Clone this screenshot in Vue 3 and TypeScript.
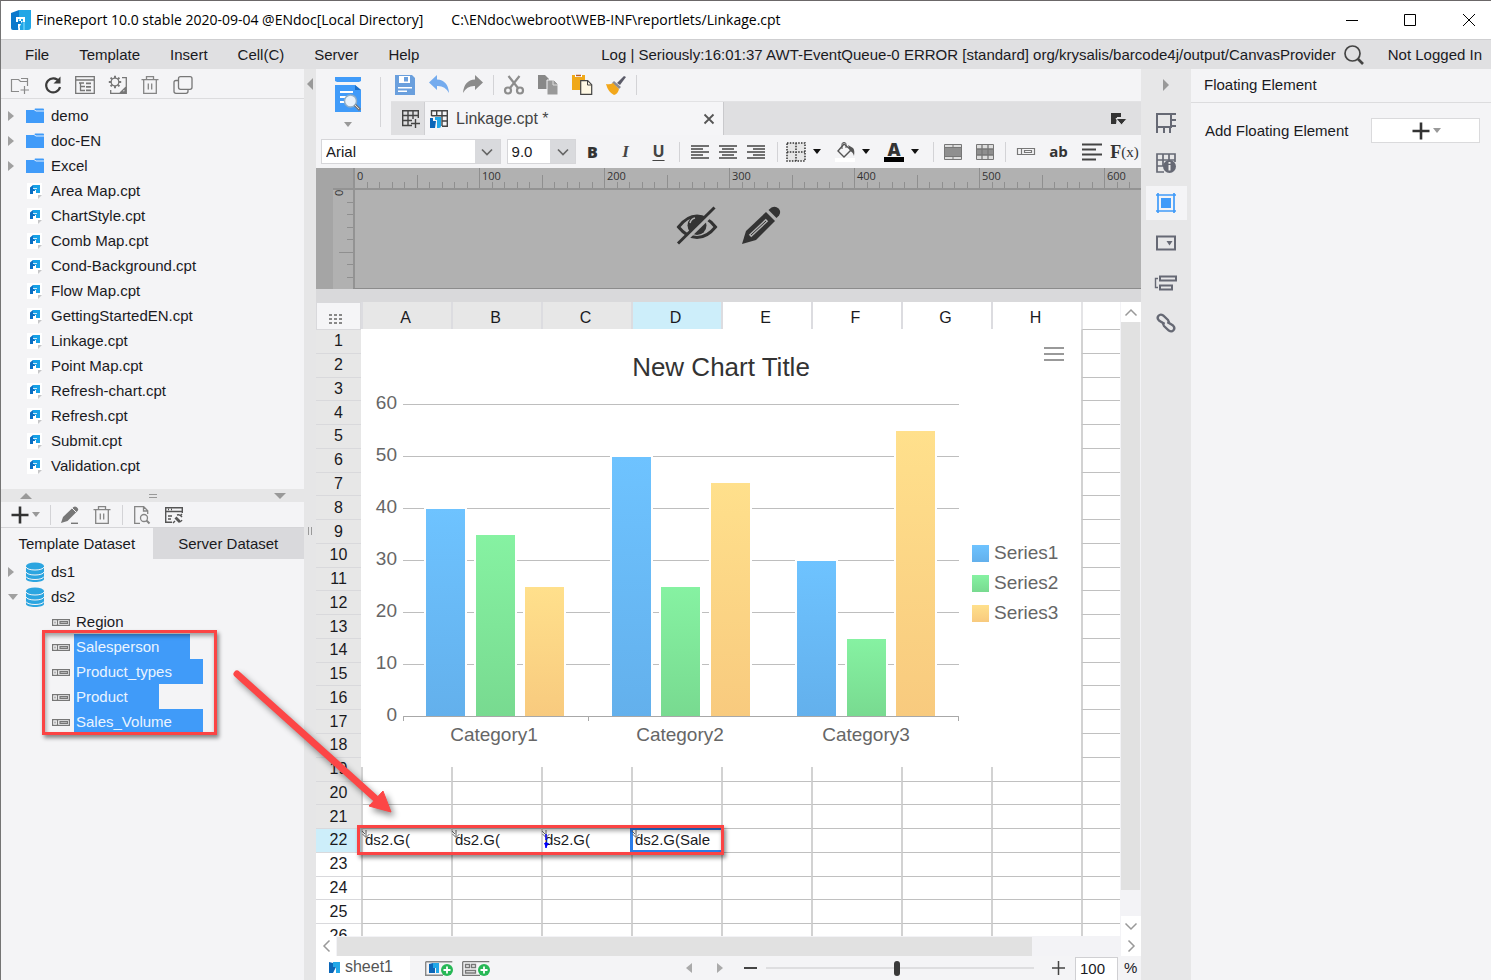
<script setup lang="ts">
import { computed, h, onBeforeUnmount, onMounted, ref } from 'vue'

const icons: Record<string, string> = {
  logo: '<path d="M0 3 8 0v7H5v4h5v3l-3 6H2q-2 0-2-2z" fill="#0a78cc"/><path d="M8 0h12v17q0 3-3 3h-3V8H9l-1 3H5V7h3z" fill="#20a6e6"/><path d="M9 20h5v-9l-4 3z" fill="#55c4f4"/><path d="M9 20v-6l3-3h-2V8h4v3l-2 2v7z" fill="#20a6e6"/><path d="M5 7h9v5h-2V9H7v3H5z" fill="#fff"/><path d="M7 14h3l-3 6z" fill="#fff"/>',
  search: '<g fill="none" stroke="#444"><circle cx="8.500" cy="8.500" r="7.500" stroke-width="1.700"/><path d="m14 14 5 5" stroke-width="2.600"/></g>',
  newFolder: '<g fill="none" stroke="#8a8a8a" stroke-width="1.200"><path d="M9 16.500H1.500v-12h7l2 2h7V11M11 3.500h6.500v3M14.500 11v8M10.500 15h8.500"/></g>',
  refresh: '<path d="M16 6.500A7 7 0 1 0 17 12" fill="none" stroke="#3c3c3c" stroke-width="2.200"/><path d="M17.500 1.500v7h-7z" fill="#3c3c3c"/>',
  treeView: '<g fill="none" stroke="#777" stroke-width="1.300"><path d="M.700 1.700h18.600v16.600H.700zM.700 5h18.600M5.500 8v7.500H10M5.500 11.500H10M4 8h5"/><path d="M11 8.300h5M11 11.800h5M11 15.300h5" stroke-width="1.800"/></g>',
  gearForm: '<g fill="none" stroke="#777" stroke-width="1.300"><circle cx="7" cy="7" r="3.800"/><path d="M7 .800v2.200M7 11v2.200M.800 7H3M11 7h2.200M2.600 2.600l1.600 1.600M9.800 9.800l1.600 1.600M2.600 11.400l1.600-1.600M9.800 4.200l1.600-1.600" stroke-width="2"/><path d="M14 2.700h4.300v15.600H2.700V15M13 17l4-4v4z"/></g>',
  trash: '<g fill="none" stroke="#858585" stroke-width="1.300"><path d="M1.500 4.700h17M6.500 4.500V1.700h7v2.800M3.700 5v13.300h12.600V5M8.300 8.500v6M11.700 8.500v6"/></g>',
  copyOutline: '<g fill="none" stroke="#777" stroke-width="1.300"><rect x="5.500" y="1.700" width="13.500" height="12.600" rx="2"/><path d="M5.500 5.500H3q-2 0-2 2v9q0 1.800 2 1.800h10q2 0 2-2v-2"/></g>',
  folder: '<path d="M0 3h8l1-1.500h8q1 0 1 1V16H0z" fill="#409bf9"/><path d="M7.500 2.200 10 4h8" stroke="#e4f0fd" fill="none" stroke-width="1"/>',
  file: '<path d="M1 1h15v12l-4 4H1z" fill="#fff"/><path d="M12 17v-4h4z" fill="#c6c6c8"/><path d="M4 5.500 7 3v4h2v2H7v3H4z" fill="#0b6fc4"/><path d="M7 3h7v8h-4V8H8V6H7z" fill="#17a0e6"/><path d="M7 6h4v1H7z" fill="#cfeafa"/>',
  db: '<path d="M0 4v13c0 4 18 4 18 0V4z" fill="#2ca5e0"/><ellipse cx="9" cy="4" rx="9" ry="3.500" fill="#2ca5e0"/><path d="M0 5c1 4 17 4 18 0M0 10c1 4 17 4 18 0M0 14.500c1 4 17 4 18 0" fill="none" stroke="#f4f4f6" stroke-width="1"/>',
  field: '<g fill="none" stroke="#777" stroke-width="1.200"><path d="M.600 6.600h16.800v5.800H.600z"/><path d="M5.500 7v5"/><path d="M8 8.700h7.500v1.700H8z"/></g><path d="M3 8.500v2" stroke="#777"/>',
  plus: '<path d="M10 1.500v17M1.500 10h17" stroke="#333" stroke-width="2.600"/>',
  pencil: '<path d="m1 18 2-6L13.500 2q1.500-1 3 0l1 1q1.500 1.500 0 3L7.500 16z" fill="#777"/><path d="m12 3 4.500 4.500" stroke="#f4f4f6"/><path d="M11 18.300h7" stroke="#777" stroke-width="1.400"/>',
  docSearch: '<g fill="none" stroke="#858585" stroke-width="1.300"><path d="M8 18.300H2.700V1.700h9l4 4V9M11.500 2v4h4"/><circle cx="12" cy="13" r="3.500"/><path d="m14.500 15.500 3 3" stroke-width="2"/></g>',
  connect: '<g fill="none" stroke="#555" stroke-width="1.400"><path d="M8 17.300H1.700V2.700h16.600V8M2 6.500h16M4 11h4M4 14h3M4 4.500h1M7 4.500h1"/><path d="m9 18 2-2m5-5 2-2m-7 4 4 4q2 0 3-2m-6-3 4 4m-3-6q3-1 5 2"/></g>',
  preview: '<path d="M0 0h26v4l-2 1H2L0 4z" fill="#409bf9"/><path d="M0 8h20l6 5v22H0z" fill="#409bf9"/><path d="M20 8v5h6z" fill="#1b6fc9"/><path d="M5 15h13M5 20h7M5 25h5" stroke="#fff" stroke-width="2"/><circle cx="15.500" cy="24" r="6" fill="#e7f1fa" stroke="#8faec8" stroke-width="1.500"/><path d="m20 28 5 5" stroke="#777" stroke-width="3"/><path d="m20 28 4 4" stroke="#ddd" stroke-width="1"/>',
  save: '<path d="M0 0h17l3 3v17H0z" fill="#6a9fdd"/><path d="M4 1h11v7H4z" fill="#fff"/><path d="M9 2h4v4.500H9z" fill="#6a9fdd"/><path d="M3 12.700h14M3 16.300h9" stroke="#fff" stroke-width="1.600"/>',
  undo: '<path d="M0 7.500 8 0v4.500Q19 5 20 18 16 10.500 8 11v4z" fill="#74abee"/>',
  redo: '<path d="M20 7.500 12 0v4.500Q1 5 0 18 4 10.500 12 11v4z" fill="#8b8b8b"/>',
  cut: '<g fill="none" stroke="#8d8d8d" stroke-width="2.200"><circle cx="4" cy="15.500" r="3"/><circle cx="16" cy="15.500" r="3"/><path d="M4.500 1 14 13M15.500 1 6 13"/></g>',
  copy: '<path d="M0 0h7l4 4v10H0z" fill="#888"/><path d="M9 5h7l4 4v11H9z" fill="#999" stroke="#f4f4f6" stroke-width="1"/><path d="M15 5v5h5" fill="none" stroke="#ddd"/>',
  paste: '<path d="M0 0h13v15H0z" fill="#f0a818"/><path d="M3 0h7v2H3z" fill="#fff"/><path d="M4 .500h5" stroke="#b85c28" stroke-width="1.500"/><path d="M8.700 5.700h7l4 4v9.600h-11z" fill="#fff8e4" stroke="#444" stroke-width="1.200"/><path d="M15.500 6v4h4" fill="none" stroke="#444"/>',
  brush: '<path d="m11 8 7-7 2 1-6 8z" fill="#5b5b68"/><path d="m8 6 7 6-2 2-7-6z" fill="#8c8c94"/><path d="M7 8 13 14q-1 5-5 6Q2 17 0 9q4 1 7-1z" fill="#f2a71b"/>',
  newTab: '<g fill="none" stroke="#444" stroke-width="1.400"><path d="M11 16.500H1.700V1.700h15.600V9M1.700 6.500h15.600M1.700 11.500H11M7 2v14.500M12 2v8M14.500 10v9M10 14.500h9"/></g>',
  tabFile: '<path d="M2.500 7V1.700h15.800v15.600H13M2.500 6.700h15.800M13 12h5.300M7.700 2v5M13 2v15" fill="none" stroke="#444" stroke-width="1.400"/><path d="M1 9h3v3h3l-1 7H1z" fill="#0b66b8"/><path d="M6 8h6v9q0 2-2 2H8v-8H6z" fill="#22a8e8"/>',
  close: '<path d="m5.500 5.500 9 9m0-9-9 9" stroke="#555" stroke-width="1.800"/>',
  tabMenu: '<path d="M2 4h10v4H8l-1 7H2z" fill="#333"/><path d="M7 9.500h11L12.500 16z" fill="#333" stroke="#e0e0e2"/>',
  chevron: '<path d="m5 7.500 5 5 5-5" fill="none" stroke="#666" stroke-width="1.700"/>',
  alignLeft: '<path d="M1 4h18M1 7h12M1 10h18M1 13h12M1 16h18" stroke="#444" stroke-width="1.400"/>',
  alignCenter: '<path d="M1 4h18M4 7h12M1 10h18M4 13h12M1 16h18" stroke="#444" stroke-width="1.400"/>',
  alignRight: '<path d="M1 4h18M7 7h12M1 10h18M7 13h12M1 16h18" stroke="#444" stroke-width="1.400"/>',
  border: '<path d="M1 1h18v18H1zM10 1v18M1 10h18" fill="#e6e6e6" stroke="#333" stroke-width="1.500" stroke-dasharray="1.500 1.300"/>',
  bucket: '<path d="m9 2 7 6-7 7-6-6z" fill="none" stroke="#555" stroke-width="1.400"/><path d="M7 7V2q0-1.500 2-1.500t2 1.500v4" fill="none" stroke="#555"/><path d="m13 3 5 3q2 2 1 8-1-4-4-5z" fill="#555"/><path d="M0 16h20v4H0z" fill="#fff"/>',
  merge: '<path d="M1.500 2.500h17v15h-17z" fill="#ddd" stroke="#777"/><path d="M2 5.500h16v9H2z" fill="#8f8f8f"/><path d="M10 2.500v3M10 14.500v3M1.500 5.500h17M1.500 14.500h17" stroke="#777"/>',
  split: '<path d="M1.500 2.500h17v15h-17z" fill="#ddd" stroke="#777"/><path d="M2 7h16v6H2z" fill="#8f8f8f"/><path d="M7 2.500v15M13 2.500v15M1.500 7h17M1.500 13h17" stroke="#777" stroke-width="1.300"/>',
  widget: '<g fill="none" stroke="#777" stroke-width="1.200"><path d="M1.500 6.500h17v6h-17zM5.500 6.500v6M8.500 8.500h7v2h-7z"/></g>',
  para: '<path d="M0 2.500h20M0 7.500h14M0 12.500h20M0 17.500h14" stroke="#444" stroke-width="2"/>',
  cells: '<g fill="none" stroke="#666974" stroke-width="2"><path d="M1 20V1h19M1 14h14V1M15 7h5M14 13h6M14 20v-6M8 14v6"/></g>',
  cellInfo: '<g fill="none" stroke="#666974" stroke-width="1.700"><path d="M8 19H1V1h18v8M1 7h18M1 13h7M7 1v12M13 1v6"/></g><circle cx="13.500" cy="13.500" r="6.500" fill="#666974"/><path d="M13.500 12v5.500M13.500 9v1.700" stroke="#eee" stroke-width="2"/>',
  floating: '<g fill="none" stroke="#409bf9" stroke-width="1.700"><path d="M0 2h20M0 18h20M2 0v20M18 0v20"/></g><path d="M5 5h10v10H5z" fill="#409bf9"/>',
  dropdown: '<path d="M1 3.500h18v13H1z" fill="none" stroke="#666974" stroke-width="2"/><path d="M10.500 8h6l-3 4.500z" fill="#666974"/>',
  hyper: '<g fill="none" stroke="#666974" stroke-width="2"><path d="M4 3.500h16v4H4zM4 12.500h12v4H4z"/><path d="M2 5.500H-.500v9H2" stroke-width="1.400"/></g>',
  link: '<g fill="none" stroke="#666974" stroke-width="2.300"><path d="M8.500 11 3 7.500q-2.500-2.500-.500-4.700t4.700-.300l4.800 4.500q1.500 2 .500 4"/><path d="m11.500 9 5.500 3.500q2.500 2.500.500 4.700t-4.700.300l-4.800-4.500q-1.500-2-.500-4"/></g>',
  eyeOff: '<g fill="none" stroke="#333"><path d="M1.500 21Q10 10 20 10t18.500 11Q30 31.500 20 31.500T1.500 21z" stroke-width="3"/></g><circle cx="20" cy="19.500" r="9.500" fill="#333"/><path d="M13 17q1-4 5-5" stroke="#b1b1b1" stroke-width="1.500" fill="none"/><path d="M3 39 40 3" stroke="#b1b1b1" stroke-width="4"/><path d="M1 37.500 37.500 1.500" stroke="#333" stroke-width="3"/>',
  editBig: '<path d="m1 38 4-13L25 6l9 9L15 34z" fill="#333"/><path d="m27.500 4 3-2.500q4-2 7 1t.500 7L35.500 12z" fill="#333"/><path d="m9 30 17-16" stroke="#b1b1b1" stroke-width="3.500"/><path d="m10 29 15-14" stroke="#333" stroke-width="1"/>',
  addSheet: '<path d="M.700 2.700h26.600M.700 2.700v13.600H18" fill="none" stroke="#888" stroke-width="1.400"/><path d="M4 5 8 4v3l2 2v5H4z" fill="#0b66b8"/><path d="M8 4h6v10h-3V9H8z" fill="#22a8e8"/><circle cx="22" cy="11" r="6" fill="#27b856"/><path d="M22 7.500v7M18.500 11h7" stroke="#fff" stroke-width="1.800"/>',
  addForm: '<path d="M.700 2.700h26.600M.700 2.700v13.600H18M3.500 5.500h4v3h-4zM9.500 5.500h4v3h-4zM3.500 11.500h10v2.500h-10z" fill="none" stroke="#777" stroke-width="1.300"/><circle cx="22" cy="11" r="6" fill="#27b856"/><path d="M22 7.500v7M18.500 11h7" stroke="#fff" stroke-width="1.800"/>',
  sheet: '<path d="M0 0 4 1v4h3l-3 6H0z" fill="#0b66b8"/><path d="M4 0h7v11H7V5H4z" fill="#22a8e8"/>',
  anchor: '<path d="M5 0v7M1.500 4 5 7.500 8.500 4M1 1l3 3" fill="none" stroke="#666" stroke-width="1"/>',
  parent: '<path d="M2 0v14" stroke="#00f" stroke-width="1.500" stroke-dasharray="6 2"/><path d="M0 9h5l-3 5z" fill="#00f"/>',
}

const Icon = (p: { name: string; w?: number; hh?: number }) =>
  h('svg', {
    width: p.w ?? 20,
    height: p.hh ?? 20,
    viewBox: `0 0 ${p.w ?? 20} ${p.hh ?? 20}`,
    'aria-hidden': 'true',
    innerHTML: icons[p.name],
  })
Icon.props = ['name', 'w', 'hh']

const menus = ['File', 'Template', 'Insert', 'Cell(C)', 'Server', 'Help']
const fileTools = [
  ['newFolder', 'New folder'], ['refresh', 'Refresh'], ['treeView', 'Show in tree'],
  ['gearForm', 'Settings'], ['trash', 'Delete'], ['copyOutline', 'Copy'],
]
const folders = ['demo', 'doc-EN', 'Excel']
const files = ['Area Map.cpt', 'ChartStyle.cpt', 'Comb Map.cpt', 'Cond-Background.cpt', 'Flow Map.cpt', 'GettingStartedEN.cpt',
  'Linkage.cpt', 'Point Map.cpt', 'Refresh-chart.cpt', 'Refresh.cpt', 'Submit.cpt', 'Validation.cpt']
const fields = ['Region', 'Salesperson', 'Product_types', 'Product', 'Sales_Volume']
const editTools = [['save', 'Save'], ['undo', 'Undo'], ['redo', 'Redo']]
const clipTools = [['cut', 'Cut'], ['copy', 'Copy'], ['paste', 'Paste'], ['brush', 'Format painter']]
const sideTools = [['cells', 'Cell element'], ['cellInfo', 'Cell attributes'], ['floating', 'Floating element'],
  ['dropdown', 'Widget settings'], ['hyper', 'Condition attributes'], ['link', 'Hyperlink']]
const columns = ['A', 'B', 'C', 'D', 'E', 'F', 'G', 'H']
const rowCount = 26
const activeRow = 22
const cellText: Record<string, string> = { A: 'ds2.G(', B: 'ds2.G(', C: 'ds2.G(', D: 'ds2.G(Sale' }

const fontName = ref('Arial')
const fontSize = ref('9.0')
const zoom = ref('100')
const slider = ref(49)
const tab = ref('template')

const rulerEl = ref<HTMLElement | null>(null)
const rulerWidth = ref(0)
const measure = () => { rulerWidth.value = rulerEl.value?.clientWidth ?? 0 }
onMounted(() => { measure(); window.addEventListener('resize', measure) })
onBeforeUnmount(() => window.removeEventListener('resize', measure))

const ticks = computed(() => {
  const count = Math.max(0, Math.ceil((rulerWidth.value - 38) / 12.5))
  return Array.from({ length: count }, (_, i) => {
    const x = 38 + Math.round(i * 12.5)
    return {
      x,
      top: i % 10 === 0 ? 0 : i % 5 === 0 ? 7 : 14,
      label: i % 10 === 0 && x + 26 < rulerWidth.value ? String(i * 10) : '',
    }
  })
})
const vTicks = Array.from({ length: 7 }, (_, i) => ({ y: 21 + Math.round((i + 1) * 12.5), x: i === 4 ? 23 : 31 }))

const series = [
  { name: 'Series1', id: 'g1', values: [40, 50, 30] },
  { name: 'Series2', id: 'g2', values: [35, 25, 15] },
  { name: 'Series3', id: 'g3', values: [25, 45, 55] },
]
const yOf = (v: number) => 388 - Math.round(v * 5.2)
const bars = series.flatMap((s, si) => s.values.map((v, ci) => ({
  key: s.id + ci, fill: `url(#${s.id})`, x: 65 + Math.round(ci * 185.5 + si * 49.5), y: yOf(v), height: 388 - yOf(v),
})))
const levels = [0, 10, 20, 30, 40, 50, 60]
</script>

<template>
  <div class="window">
    <header class="titlebar">
      <Icon name="logo" />
      <span class="title">FineReport 10.0 stable 2020-09-04 @ENdoc[Local Directory]</span>
      <span class="title">C:\ENdoc\webroot\WEB-INF\reportlets/Linkage.cpt</span>
      <div class="winbtns">
        <button aria-label="Minimize"><svg width="12" height="12"><path d="M0 6.500h12" stroke="#000" /></svg></button>
        <button aria-label="Maximize"><svg width="12" height="12"><path d="M.500.500h11v11H.500z" fill="none" stroke="#000" /></svg></button>
        <button aria-label="Close"><svg width="12" height="12"><path d="m0 0 12 12M12 0 0 12" stroke="#000" /></svg></button>
      </div>
    </header>

    <nav class="menubar">
      <button v-for="m in menus" :key="m" class="menu">{{ m }}</button>
      <span class="log">Log | Seriously:16:01:37 AWT-EventQueue-0 ERROR [standard] org/krysalis/barcode4j/output/CanvasProvider</span>
      <button class="find" aria-label="Search"><Icon name="search" /></button>
      <button class="login">Not Logged In</button>
    </nav>

    <div class="body">
      <aside class="left">
        <div class="filetools">
          <button v-for="t in fileTools" :key="t[0]" :aria-label="t[1]"><Icon :name="t[0]" /></button>
        </div>
        <ul class="tree files">
          <li v-for="f in folders" :key="f"><i class="tri right"></i><Icon name="folder" :w="18" :hh="18" /><span>{{ f }}</span></li>
          <li v-for="f in files" :key="f"><i class="tri none"></i><Icon name="file" :w="18" :hh="18" /><span>{{ f }}</span></li>
        </ul>
        <div class="hsplit"><i class="tri up"></i><i class="grip"></i><i class="tri down"></i></div>
        <div class="dstools">
          <button class="add" aria-label="Add dataset"><Icon name="plus" /><i class="caret"></i></button>
          <i class="sep"></i>
          <button aria-label="Edit"><Icon name="pencil" /></button>
          <button aria-label="Delete"><Icon name="trash" /></button>
          <i class="sep"></i>
          <button aria-label="Preview"><Icon name="docSearch" /></button>
          <button aria-label="Connection"><Icon name="connect" /></button>
        </div>
        <div class="dstabs">
          <button :class="{ on: tab === 'template' }" @click="tab = 'template'">Template Dataset</button>
          <button :class="{ on: tab === 'server' }" @click="tab = 'server'">Server Dataset</button>
        </div>
        <ul class="tree ds">
          <li><i class="tri right"></i><Icon name="db" :w="18" :hh="20" /><span>ds1</span></li>
          <li><i class="tri down"></i><Icon name="db" :w="18" :hh="20" /><span>ds2</span></li>
          <li v-for="(f, i) in fields" :key="f" class="field"><Icon name="field" :w="18" :hh="18" /><span :class="{ picked: i > 0 }">{{ f }}</span></li>
          <li class="mark mark-fields" aria-hidden="true"></li>
        </ul>
      </aside>

      <div class="vsplit"><i class="tri left-arrow"></i><i class="vgrip"></i></div>

      <main class="center">
        <div class="top">
          <button class="preview" aria-label="Preview">
            <Icon name="preview" :w="26" :hh="36" />
            <i class="caret"></i>
          </button>
          <div class="topright">
            <div class="quick">
              <div class="group"><button v-for="t in editTools" :key="t[0]" :aria-label="t[1]"><Icon :name="t[0]" /></button></div>
              <i class="sep"></i>
              <div class="group"><button v-for="t in clipTools" :key="t[0]" :aria-label="t[1]"><Icon :name="t[0]" /></button></div>
              <i class="sep"></i>
            </div>
            <div class="tabs">
              <button class="newtab" aria-label="New template"><Icon name="newTab" /></button>
              <div class="tab"><Icon name="tabFile" /><span>Linkage.cpt *</span><button aria-label="Close tab"><Icon name="close" /></button></div>
              <button class="tabmenu" aria-label="Tab list"><Icon name="tabMenu" /></button>
            </div>
          </div>
        </div>

        <div class="format">
          <span class="combo font"><select v-model="fontName" aria-label="Font"><option>Arial</option></select><span><Icon name="chevron" /></span></span>
          <span class="combo size"><select v-model="fontSize" aria-label="Font size"><option>9.0</option></select><span><Icon name="chevron" /></span></span>
          <div class="g33"><button class="b">B</button><button class="i">I</button><button class="u">U</button></div>
          <i class="sep"></i>
          <div class="g28">
            <button aria-label="Align left"><Icon name="alignLeft" /></button>
            <button aria-label="Align center"><Icon name="alignCenter" /></button>
            <button aria-label="Align right"><Icon name="alignRight" /></button>
          </div>
          <i class="sep"></i>
          <div class="g50">
            <button aria-label="Border"><Icon name="border" /><i class="caret dark"></i></button>
            <button aria-label="Fill"><Icon name="bucket" /><i class="caret dark"></i></button>
            <button aria-label="Font color"><span class="fontcolor">A</span><i class="caret dark"></i></button>
          </div>
          <i class="sep"></i>
          <div class="g32">
            <button aria-label="Merge"><Icon name="merge" /></button>
            <button aria-label="Split"><Icon name="split" /></button>
          </div>
          <i class="sep"></i>
          <div class="g33">
            <button aria-label="Widget"><Icon name="widget" /></button>
            <button class="ab">ab</button>
            <button aria-label="Rich text"><Icon name="para" /></button>
            <button class="fx">F<small>(x)</small></button>
          </div>
        </div>

        <div ref="rulerEl" class="ruler">
          <svg class="rulersvg" aria-hidden="true">
            <rect x="0" y="0" width="17" height="100%" fill="#a5a5a5" />
            <rect x="0" y="0" width="37" height="20" fill="#a5a5a5" />
            <g stroke="#8f8f8f">
              <path v-for="t in ticks" :key="t.x" :d="`M${t.x}.500 ${t.top}V20`" />
              <path v-for="t in vTicks" :key="t.y" :d="`M${t.x} ${t.y}.500H37`" />
            </g>
            <rect x="17" y="20" width="100%" height="2" fill="#939393" />
            <rect x="37" y="0" width="2" height="100%" fill="#939393" />
            <rect x="37" y="120" width="100%" height="1" fill="#8c8c8c" />
            <template v-for="t in ticks" :key="'l' + t.x"><text v-if="t.label" :x="t.x + 3" y="12">{{ t.label }}</text></template>
            <text x="-28" y="27" transform="rotate(-90)">0</text>
          </svg>
          <button aria-label="Hide"><Icon name="eyeOff" :w="40" :hh="40" /></button>
          <button aria-label="Edit"><Icon name="editBig" :w="40" :hh="40" /></button>
        </div>

        <div class="sheetwrap">
          <div class="sheet">
            <table>
              <colgroup><col class="hcol" /><col v-for="c in columns" :key="c" class="dcol" /><col /></colgroup>
              <thead>
                <tr>
                  <th class="corner"><svg width="14" height="12" aria-hidden="true"><path d="M0 2h14M0 6h14M0 10h14" stroke="#888" stroke-width="2" stroke-dasharray="3 2" /></svg></th>
                  <th v-for="(c, i) in columns" :key="c" :class="{ gray: i < 3, cur: i === 3 }">{{ c }}</th>
                  <th class="last"></th>
                </tr>
              </thead>
              <tbody>
                <tr v-for="r in rowCount" :key="r">
                  <th :class="{ gray: r < activeRow, cur: r === activeRow }">{{ r }}</th>
                  <td v-for="c in columns" :key="c">
                    <div v-if="r === activeRow && cellText[c]" class="cell" :class="{ selected: c === 'D' }">
                      <Icon class="mk" name="anchor" :w="10" :hh="10" />
                      <Icon v-if="c === 'C'" class="pk" name="parent" :w="5" :hh="14" />
                      {{ cellText[c] }}
                    </div>
                  </td>
                  <td></td>
                </tr>
              </tbody>
            </table>

            <svg class="chart" width="720" height="438" viewBox="0 0 720 438" role="img" aria-label="New Chart Title">
              <defs>
                <linearGradient id="g1" x1="0" y1="0" x2="0" y2="1"><stop offset="0" stop-color="#6ec3ff" /><stop offset="1" stop-color="#63b0ec" /></linearGradient>
                <linearGradient id="g2" x1="0" y1="0" x2="0" y2="1"><stop offset="0" stop-color="#86f2a2" /><stop offset="1" stop-color="#78da90" /></linearGradient>
                <linearGradient id="g3" x1="0" y1="0" x2="0" y2="1"><stop offset="0" stop-color="#ffe08c" /><stop offset="1" stop-color="#f8ca7e" /></linearGradient>
              </defs>
              <rect width="720" height="438" fill="#fff" />
              <text x="360" y="47" class="ctitle">New Chart Title</text>
              <g v-for="l in levels" :key="l">
                <path :d="`M42 ${yOf(l) - 1}.500H598`" stroke="#bebebe" />
                <text x="36" :y="yOf(l) + 4" class="ylab">{{ l }}</text>
              </g>
              <rect v-for="b in bars" :key="b.key" :x="b.x - 1" :y="b.y - 1" width="41" :height="b.height + 1" :fill="b.fill" stroke="#fff" stroke-width="2" />
              <path d="M42.500 392v-4.500h185v4.500M227.500 387.500h370v4.500" fill="none" stroke="#a8a8a8" />
              <text v-for="n in 3" :key="n" :x="133 + (n - 1) * 186" y="412" class="xlab">Category{{ n }}</text>
              <g v-for="(s, i) in series" :key="s.name">
                <rect x="611" :y="216 + i * 30" width="17" height="17" :fill="`url(#${s.id})`" />
                <text x="633" :y="230 + i * 30" class="leg">{{ s.name }}</text>
              </g>
              <path d="M683 19h20M683 25h20M683 31h20" stroke="#999" stroke-width="2" />
            </svg>
            <div class="mark mark-cells" aria-hidden="true"></div>
          </div>
          <div class="vscroll">
            <button aria-label="Scroll up"><svg width="14" height="9"><path d="m1.500 7.500 5.500-5.500 5.500 5.500" /></svg></button>
            <div class="vthumb"></div>
            <button aria-label="Scroll down"><svg width="14" height="9"><path d="m1.500 1.500 5.500 5.500 5.500-5.500" /></svg></button>
          </div>
        </div>
        <div class="hscroll">
          <button aria-label="Scroll left"><svg width="9" height="14"><path d="m7.500 1.500-5.500 5.500 5.500 5.500" /></svg></button>
          <div class="hthumb"></div>
          <button aria-label="Scroll right"><svg width="9" height="14"><path d="m1.500 1.500 5.500 5.500-5.500 5.500" /></svg></button>
        </div>
        <footer class="bottom">
          <button class="sheettab"><Icon name="sheet" :w="11" :hh="11" />sheet1</button>
          <button class="addsheet" aria-label="Add sheet"><Icon name="addSheet" :w="28" :hh="18" /></button>
          <button class="addform" aria-label="Add form"><Icon name="addForm" :w="28" :hh="18" /></button>
          <div class="zoom">
            <button aria-label="Previous sheet"><i class="tri nav-left"></i></button>
            <button aria-label="Next sheet"><i class="tri nav-right"></i></button>
            <button class="minus" aria-label="Zoom out"><svg width="13" height="14"><path d="M0 7h13" stroke="#444" stroke-width="2" /></svg></button>
            <input v-model="slider" type="range" min="0" max="100" aria-label="Zoom" />
            <button class="plus" aria-label="Zoom in"><svg width="13" height="14"><path d="M0 7h13M6.500 0v14" stroke="#444" stroke-width="1.500" /></svg></button>
            <input id="zoomval" v-model="zoom" type="text" />
            <label for="zoomval">%</label>
          </div>
        </footer>
      </main>

      <nav class="strip">
        <div class="striptop"><i class="tri right-arrow"></i></div>
        <button v-for="t in sideTools" :key="t[0]" :class="{ on: t[0] === 'floating' }" :aria-label="t[1]"><Icon :name="t[0]" /></button>
      </nav>

      <aside class="props">
        <h2>Floating Element</h2>
        <div class="row">
          <span id="addlabel">Add Floating Element</span>
          <button aria-labelledby="addlabel"><Icon name="plus" /><i class="caret"></i></button>
        </div>
      </aside>
    </div>

    <svg class="arrow" width="180" height="160" viewBox="0 0 180 160" aria-hidden="true">
      <path d="M12 14 150 138" stroke="#fc4646" stroke-width="7" stroke-linecap="round" />
      <path d="M166 152 158 131 144 146z" fill="#fc4646" stroke="#fc4646" />
    </svg>
  </div>
</template>

<style>
html, body { margin: 0; overflow: hidden; }
</style>

<style scoped>
* { box-sizing: border-box; }
.window { position: relative; display: flex; flex-direction: column; height: 100vh; overflow: hidden; border-top: 1px solid #6b6768; border-left: 1px solid #747474; background: #f4f4f6; color: #1a1a1e; font: 15px/20px "Liberation Sans", Arial, sans-serif; }
button { display: flex; align-items: center; justify-content: center; border: 0; padding: 0; margin: 0; background: none; color: inherit; font: inherit; white-space: nowrap; }
svg { display: block; flex: none; overflow: visible; }
i { font-style: normal; flex: none; }
ul { list-style: none; margin: 0; padding: 0; }

.titlebar { display: flex; align-items: center; flex: none; height: 38px; padding: 0 0 0 10px; background: #fff; font: 14px/20px "Open Sans", "Noto Sans", sans-serif; color: #000; }
.title { margin-left: 5px; white-space: nowrap; }
.title + .title { margin-left: 28px; }
.winbtns { display: flex; margin-left: auto; }
.winbtns button { width: 58px; height: 38px; }
.winbtns button:last-child { width: 52px; padding-right: 16px; justify-content: flex-end; }

.menubar { display: flex; align-items: center; flex: none; height: 30px; padding: 0 9px; background: #e0e0e2; border-top: 1px solid #cfcfd1; white-space: nowrap; }
.menu { padding: 0 15px; height: 29px; }
.log { margin-left: auto; }
.find { margin: 0 24px 0 8px; }

.body { display: flex; flex: 1; min-height: 0; }
.left { display: flex; flex-direction: column; flex: none; width: 303px; }
.filetools { display: flex; flex: none; justify-content: space-between; align-items: center; height: 30px; padding: 2px 111px 0 9px; border-bottom: 1px solid #dcdcde; }
.tri { display: block; width: 0; height: 0; border: 5px solid transparent; }
.tree li { display: flex; align-items: center; height: 25px; padding-left: 7px; }
.tree li > svg { margin: 0 7px 0 8px; }
.tree .tri { width: 10px; }
.tree .tri.right { border-left: 6px solid #a0a0a0; border-right-width: 0; }
.tree .tri.down { border-top: 6px solid #a0a0a0; border-bottom-width: 0; }
.files { flex: none; height: 390px; padding-top: 4px; }
.hsplit { display: flex; flex: none; align-items: center; justify-content: space-between; height: 13px; padding: 0 18px 0 19px; background: #e6e6e7; }
.hsplit .tri { border-width: 6px; }
.up { border-bottom-color: #999; border-top-width: 0 !important; }
.hsplit .down { border-top-color: #999; border-bottom-width: 0; }
.grip { width: 8px; height: 4px; border-top: 1px solid #999; border-bottom: 1px solid #999; }
.dstools { display: flex; flex: none; align-items: center; height: 25px; padding-left: 9px; }
.dstools button + button { margin-left: 12px; }
.caret { display: block; width: 0; height: 0; margin-left: 2px; border: 4px solid transparent; border-top: 5px solid #999; border-bottom: 0; }
.caret.dark { border-top-color: #111; margin-left: 7px; }
.sep { width: 1px; height: 20px; background: #d3d3d6; }
.dstools .sep { margin: 0 9px 0 10px; }
.dstabs { display: flex; flex: none; height: 32px; border-top: 1px solid #d5d5d8; }
.dstabs button { flex: 1; padding-top: 1px; background: #d9d9dc; }
.dstabs .on { background: #f4f4f6; }
.ds { position: relative; flex: 1; }
.tree li.field { padding-left: 44px; }
.tree .field > svg { margin: 0 4px 0 7px; }
.field span { padding: 0 31px 0 2px; height: 25px; line-height: 25px; }
.picked { background: #409bf9; color: #eaf4ff; }
.mark { border: 3px solid #fb4444; box-shadow: 2px 3px 4px rgba(0, 0, 0, .45), inset 1px 3px 4px rgba(0, 0, 0, .35); }
.tree .mark { position: absolute; left: 41px; top: 71px; width: 175px; height: 105px; padding: 0; }

.vsplit { display: flex; flex-direction: column; flex: none; align-items: center; width: 12px; background: #e6e6e7; }
.left-arrow { margin-top: 9px; border-width: 6px; border-right-color: #999; border-left-width: 0; }
.vgrip { margin-top: 437px; width: 4px; height: 8px; border-left: 1px solid #999; border-right: 1px solid #999; }

.center { display: flex; flex: 1; flex-direction: column; min-width: 0; }
.top { display: flex; flex: none; height: 66px; }
.preview { flex-direction: column; width: 65px; height: 50px; margin: 8px 10px 0 0; border-right: 1px solid #d5d5d8; justify-content: flex-start; }
.preview .caret { margin: 9px 0 0; }
.topright { display: flex; flex: 1; flex-direction: column; min-width: 0; }
.quick { display: flex; align-items: center; height: 32px; padding-left: 4px; }
.group { display: flex; gap: 14px; }
.quick .sep { margin: 0 10px; }
.tabs { display: flex; height: 34px; background: #dfdfe1; border-top: 1px solid #e2e2e4; }
.newtab { width: 34px; padding-left: 6px; border-right: 1px solid #cfcfd2; }
.tab { display: flex; align-items: center; width: 299px; padding: 0 4px; background: #f5f5f7; border-right: 1px solid #c9c9cc; font-size: 16px; color: #444; }
.tab span { flex: 1; margin-left: 7px; }
.tabmenu { margin-left: auto; padding-right: 12px; }
.format { display: flex; flex: none; align-items: center; height: 33px; padding-left: 5px; }
.combo { display: flex; height: 25px; border: 1px solid #d6d6d9; }
.combo select { flex: 1; min-width: 0; appearance: none; border: 0; border-radius: 0; padding: 0 4px; background: #fff; color: #1a1a1e; font: inherit; }
.combo > span { display: flex; align-items: center; justify-content: center; width: 25px; background: #d9dadd; }
.font { width: 181px; margin-right: 6px; }
.size { width: 70px; }
.g33, .g32, .g28, .g50 { display: flex; }
.g33 button { width: 33px; height: 24px; }
.g32 button { width: 32px; }
.g28 button { width: 28px; }
.g50 button { width: 50px; justify-content: flex-start; }
.g33 + .sep { margin: 0 6px 0 4px; }
.g28 + .sep { margin: 0 8px 0 7px; }
.g50 { width: 147px; }
.g50 + .sep { margin: 0 3px 0 0; }
.g32 + .sep { margin: 0 3px 0 4px; }
.b, .ab, .fontcolor { font-family: "Open Sans", "Noto Sans", sans-serif; font-weight: 800; color: #333; }
.b { font-size: 16px; }
.i { font: italic bold 17px/20px "Liberation Serif", serif; color: #444; }
.g33 .u { font-size: 16px; font-family: "Open Sans", sans-serif; font-weight: 700; color: #444; text-decoration: underline; text-underline-offset: 3px; padding-bottom: 2px; }
.ab { padding-bottom: 1px; font-weight: 700; }
.fontcolor { width: 20px; height: 20px; border-bottom: 5px solid #000; font-size: 18px; line-height: 14px; text-align: center; }
.fx { font: bold 18px/20px "Liberation Serif", serif; color: #333; }
.fx small { font-size: 15px; font-weight: 400; }

.ruler { position: relative; display: flex; flex: none; justify-content: center; gap: 24px; height: 121px; padding-top: 38px; background: #b1b1b1; }
.rulersvg { position: absolute; inset: 0; width: 100%; height: 100%; overflow: hidden; }
.rulersvg text { font: 11px "Open Sans", sans-serif; fill: #333; }
.ruler button { position: relative; width: 40px; height: 40px; }

.sheetwrap { display: flex; flex: 1; min-height: 0; border-top: 13px solid #d9d9db; background: #fff; }
.sheet { position: relative; flex: 1; min-width: 0; overflow: hidden; }
table { width: 100%; height: 646px; table-layout: fixed; border-collapse: separate; border-spacing: 0; }
.hcol { width: 45px; }
.dcol { width: 90px; }
th, td { padding: 0; }
th { font-weight: 400; font-size: 16px; line-height: 20px; text-align: center; }
thead th { height: 28px; padding: 3px 3px 0 0; border-left: 2px solid #dcdce0; background: #fff; }
thead .corner { padding: 0; border: 1px solid #d9d9dc; background: #f5f5f7; }
.corner svg { margin: 6px auto 0 12px; }
thead .last { border-bottom: 1px solid #c0c0c0; border-left-color: #e4e4e6; }
tbody th { border-bottom: 1px solid #d9d9dc; }
th.gray { background: #e7e7e7; }
th.cur { background: #cdeefa; }
td { border-left: 2px solid #d2d2d2; border-bottom: 1px solid #c0c0c0; }
.cell { position: relative; height: 20px; padding-left: 2px; line-height: 20px; white-space: nowrap; }
.mk { position: absolute; left: -2px; top: 0; }
.pk { position: absolute; left: 1px; top: 4px; }
.selected { outline: 3px solid #2b7de9; }
.chart { position: absolute; left: 45px; top: 27px; }
.chart text { font-family: "Liberation Sans", Arial, sans-serif; font-size: 19px; fill: #666; }
.chart .ctitle { font-size: 26px; fill: #333; text-anchor: middle; }
.chart .ylab { text-anchor: end; }
.chart .xlab { text-anchor: middle; }
.mark-cells { position: absolute; left: 41px; top: 523px; width: 367px; height: 30px; }

.vscroll { display: flex; flex-direction: column; width: 21px; padding-left: 1px; background: #f3f3f6; }
.vscroll button { height: 20px; background: #fff; }
.vthumb { flex: 1; margin: 0 1px 26px 0; background: #e1e1e1; }
.vscroll path, .hscroll path { fill: none; stroke: #999; stroke-width: 1.5; }
.hscroll { display: flex; flex: none; height: 20px; background: #f3f3f6; }
.hscroll button { width: 20px; background: #fff; }
.hthumb { flex: 1; margin: 1px 89px 0 1px; background: #e1e1e1; }
.bottom { display: flex; flex: none; align-items: center; height: 24px; }
.sheettab { gap: 5px; width: 94px; height: 24px; padding: 0 4px 2px 0; background: #fff; font-size: 16px; color: #555; line-height: 20px; }
.addsheet { margin: 0 9px 0 15px; }
.zoom { display: flex; align-items: center; margin-left: auto; }
.zoom button { width: 31px; height: 24px; }
.nav-left { border-right: 6px solid #aaa; border-left-width: 0; }
.nav-right { border-left: 6px solid #aaa; border-right-width: 0; }
input[type="range"] { appearance: none; width: 268px; height: 16px; margin: 0 9px 0 0; background: linear-gradient(#dedee0, #dedee0) center / 100% 2px no-repeat; }
input[type="range"]::-webkit-slider-thumb { appearance: none; width: 6px; height: 15px; border-radius: 3px; background: #3a3a3a; }
input[type="text"] { width: 43px; height: 23px; margin: 0 6px 0 1px; border: 1px solid #d0d0d3; border-bottom: 0; padding: 0 4px; background: #fff; color: #1a1a1e; font: inherit; }
.zoom label { width: 17px; }

.strip { display: flex; flex: none; flex-direction: column; align-items: center; gap: 6px; width: 50px; background: #e7e7e8; }
.striptop { display: flex; align-items: center; height: 31px; }
.right-arrow { border-width: 6px; border-left: 6px solid #999; border-right-width: 0; }
.strip button { width: 41px; height: 34px; }
.strip .on { background: #f4f4f6; }
.props { flex: none; width: 300px; }
h2 { height: 34px; margin: 0; padding: 6px 13px 0; border-bottom: 1px solid #dcdcde; font: inherit; }
.row { display: flex; align-items: center; justify-content: space-between; padding: 15px 11px 0 14px; }
.row button { width: 109px; height: 25px; background: #fff; border: 1px solid #dadadc; }
.arrow { position: absolute; left: 224px; top: 659px; filter: drop-shadow(3px 4px 3px rgba(0, 0, 0, .45)); pointer-events: none; }
</style>
